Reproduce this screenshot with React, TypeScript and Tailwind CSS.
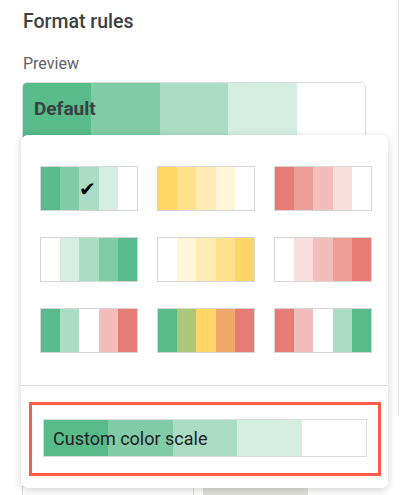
import React from 'react'

const GREEN = ['#57bb8a', '#81cca7', '#abddc4', '#d5eee2', '#ffffff']
const YELLOW = ['#ffd666', '#ffe08c', '#ffebb3', '#fff5d9', '#ffffff']
const RED = ['#e67c73', '#ec9d96', '#f3beb9', '#f9dedc', '#ffffff']

// presets, row by row
const presets: string[][] = [
  GREEN,
  YELLOW,
  RED,
  [...GREEN].reverse(),
  [...YELLOW].reverse(),
  [...RED].reverse(),
  ['#57bb8a', '#abddc4', '#ffffff', '#f3beb9', '#e67c73'],
  ['#57bb8a', '#abc978', '#ffd666', '#f2a96c', '#e67c73'],
  ['#e67c73', '#f3beb9', '#ffffff', '#abddc4', '#57bb8a'],
]

function Swatch({ colors, selected }: { colors: string[]; selected?: boolean }) {
  return (
    <div className="relative flex h-[45px] w-[98px] border border-[#d6d6d6]">
      {colors.map((c, i) => (
        <div key={i} className="h-full flex-1" style={{ backgroundColor: c }} />
      ))}
      {selected && (
        <span className="absolute left-[38px] top-[12px] text-[20px] leading-none text-black font-['DejaVu_Sans',sans-serif]">
          ✔
        </span>
      )}
    </div>
  )
}

function ScaleBar({ className, children }: { className: string; children: React.ReactNode }) {
  return (
    <div className={`relative flex overflow-hidden border border-[#dadce0] ${className}`}>
      {GREEN.map((c, i) => (
        <div key={i} className="h-full flex-1" style={{ backgroundColor: c }} />
      ))}
      <div className="absolute inset-0 flex items-center">{children}</div>
    </div>
  )
}

export default function App() {
  return (
    <div className="relative h-[495px] w-[400px] overflow-hidden bg-white font-['Roboto','Liberation_Sans',sans-serif]">
      {/* scrollbar track edge */}
      <div className="absolute right-[1px] top-0 h-[415px] w-px bg-[#e3e3e3]" />

      <div className="pl-[23px] pt-[10px]">
        <h2 className="text-[19.5px] font-medium leading-6 text-[#3c4043]">Format rules</h2>
        <div className="mt-[20px] text-[16px] leading-5 text-[#5f6368]">Preview</div>
        <ScaleBar className="-ml-px mt-[8px] h-[70px] w-[344px] rounded-t-[5px]">
          <span className="pb-[16px] pl-[11px] text-[19px] font-bold text-[#3c4043]">Default</span>
        </ScaleBar>

        <div className="-ml-px mt-[334px] flex gap-[9px]">
          <div className="h-[20px] w-[172px] border border-[#d6d6d6]" />
          <div className="h-[20px] w-[105px] bg-[#e2e2dc]" />
        </div>
      </div>

      {/* colour scale dropdown */}
      <div className="absolute left-[21px] top-[135px] h-[353px] w-[367px] rounded-[7px] bg-white shadow-[0_2px_8px_rgba(0,0,0,0.18)]">
        <div className="grid grid-cols-[repeat(3,98px)] gap-x-[19px] gap-y-[26px] pl-[19px] pt-[31px]">
          {presets.map((p, i) => (
            <Swatch key={i} colors={p} selected={i === 0} />
          ))}
        </div>
        <div className="mt-[32px] h-px bg-[#dadce0]" />
        <div className="ml-[8px] mt-[16px] h-[74px] w-[352px] border-[3px] border-[#ff5a4c] px-[11px] pt-[14px]">
          <ScaleBar className="h-[38px] w-[324px]">
            <span className="pl-[9px] text-[18px] text-[#202124]">Custom color scale</span>
          </ScaleBar>
        </div>
      </div>
    </div>
  )
}
